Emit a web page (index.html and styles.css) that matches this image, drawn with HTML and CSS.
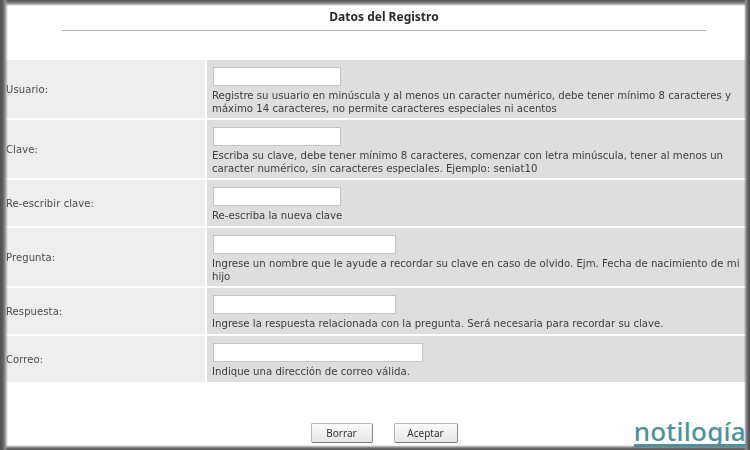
FILE: index.html
```html
<!DOCTYPE html>
<html lang="es">
<head>
<meta charset="utf-8">
<title>Datos del Registro</title>
<link rel="stylesheet" href="styles.css">
</head>
<body>
<main class="page">
  <h1 class="title">Datos del Registro</h1>
  <form class="form">
    <div class="row row-tall">
      <label class="label">Usuario:</label>
      <div class="field">
        <input class="input input-s" type="text">
        <p class="hint">Registre su usuario en minúscula y al menos un caracter numérico, debe tener mínimo 8 caracteres y máximo 14 caracteres, no permite caracteres especiales ni acentos</p>
      </div>
    </div>
    <div class="row row-tall">
      <label class="label">Clave:</label>
      <div class="field">
        <input class="input input-s" type="password">
        <p class="hint">Escriba su clave, debe tener mínimo 8 caracteres, comenzar con letra minúscula, tener al menos un caracter numérico, sin caracteres especiales. Ejemplo: seniat10</p>
      </div>
    </div>
    <div class="row">
      <label class="label">Re-escribir clave:</label>
      <div class="field">
        <input class="input input-s" type="password">
        <p class="hint">Re-escriba la nueva clave</p>
      </div>
    </div>
    <div class="row row-tall">
      <label class="label">Pregunta:</label>
      <div class="field">
        <input class="input input-m" type="text">
        <p class="hint">Ingrese un nombre que le ayude a recordar su clave en caso de olvido. Ejm. Fecha de nacimiento de mi hijo</p>
      </div>
    </div>
    <div class="row">
      <label class="label">Respuesta:</label>
      <div class="field">
        <input class="input input-m" type="text">
        <p class="hint">Ingrese la respuesta relacionada con la pregunta. Será necesaria para recordar su clave.</p>
      </div>
    </div>
    <div class="row">
      <label class="label">Correo:</label>
      <div class="field">
        <input class="input input-l" type="text">
        <p class="hint">Indique una dirección de correo válida.</p>
      </div>
    </div>
    <div class="actions">
      <button class="btn btn-reset" type="reset">Borrar</button>
      <button class="btn" type="submit">Aceptar</button>
    </div>
  </form>
</main>
<div class="frame"></div>
<a class="brand">notilogía</a>
</body>
</html>
```

FILE: styles.css
```css
* { box-sizing: border-box; }
html, body { margin: 0; height: 100%; }
body {
  position: relative;
  width: 750px;
  height: 450px;
  overflow: hidden;
  background: #fff;
  font-family: "DejaVu Sans", Verdana, sans-serif;
}
.page { filter: blur(0.4px); }
.title {
  margin: 0 44px 0 62px;
  height: 31px;
  padding-top: 10px;
  border-bottom: 1px solid #b4b4b4;
  font-family: "Noto Sans", Tahoma, sans-serif;
  font-size: 12px;
  line-height: 14px;
  font-weight: 700;
  text-align: center;
  color: #2a2a2a;
}
.form { margin-top: 29px; }
.row {
  display: grid;
  grid-template-columns: 205px 1fr;
  column-gap: 2px;
  margin-bottom: 2px;
  height: 46px;
}
.row-tall { height: 58px; }
.label {
  display: flex;
  align-items: center;
  padding-left: 6px;
  background: #eeeeee;
  font-size: 10px;
  letter-spacing: 0.1px;
  color: #4a4a4a;
}
.field {
  padding: 7px 6px 0 5px;
  background: #dedede;
}
.input {
  display: block;
  height: 19px;
  margin: 0 0 0 1px;
  padding: 0;
  border: 1px solid #c4c4c4;
  background: #fff;
}
.input-s { width: 128px; }
.input-m { width: 183px; }
.input-l { width: 210px; }
.hint {
  margin: 3px 0 0;
  font-size: 10.17px;
  line-height: 13px;
  color: #3c3c3c;
}
.actions {
  display: flex;
  justify-content: center;
  gap: 21px;
  margin: 41px 0 0 0;
  padding-left: 18px;
}
.btn {
  width: 64px;
  height: 20px;
  padding: 0;
  border: 1px solid #b8b8b8;
  border-right-color: #888;
  border-bottom-color: #777;
  border-radius: 2px;
  background: linear-gradient(#fbfbfb, #e6e6e6);
  font-family: "Noto Sans", Tahoma, sans-serif;
  font-size: 10px;
  color: #333;
}
.btn-reset { width: 62px; }
.frame {
  position: absolute;
  inset: 0;
  pointer-events: none;
  background:
    linear-gradient(90deg, #505050 0, #606060 3px, #909090 5px, rgba(144,144,144,0) 8px),
    linear-gradient(270deg, #505050 0, #606060 2px, #909090 4px, rgba(144,144,144,0) 6px),
    linear-gradient(180deg, #505050 0, #707070 2px, #a0a0a0 4px, rgba(160,160,160,0) 6px),
    linear-gradient(0deg, #505050 0, #707070 2px, #a0a0a0 3px, rgba(160,160,160,0) 5px);
}
.brand {
  position: absolute;
  right: 4px;
  bottom: 3px;
  height: 29px;
  border-bottom: 3px solid #4b9299;
  font-family: "Noto Sans", sans-serif;
  font-size: 26px;
  font-weight: 500;
  line-height: 26px;
  letter-spacing: 0.25px;
  color: #4b9299;
}
```
